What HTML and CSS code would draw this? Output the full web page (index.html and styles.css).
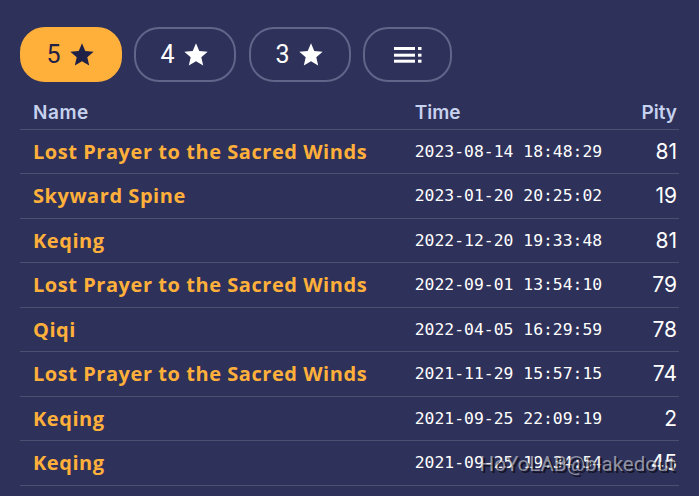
FILE: index.html
```html
<!DOCTYPE html>
<html>
<head>
<meta charset="utf-8">
<link rel="stylesheet" href="styles.css">
</head>
<body>
<div class="page">
  <div class="filters">
    <button class="chip chip-active">5 <svg class="star" viewBox="0 0 24 24"><path d="M12 17.27L18.18 21l-1.64-7.03L22 9.24l-7.19-.61L12 2 9.19 8.63 2 9.24l5.46 4.73L5.82 21z"/></svg></button>
    <button class="chip">4 <svg class="star" viewBox="0 0 24 24"><path d="M12 17.27L18.18 21l-1.64-7.03L22 9.24l-7.19-.61L12 2 9.19 8.63 2 9.24l5.46 4.73L5.82 21z"/></svg></button>
    <button class="chip chip-third">3 <svg class="star" viewBox="0 0 24 24"><path d="M12 17.27L18.18 21l-1.64-7.03L22 9.24l-7.19-.61L12 2 9.19 8.63 2 9.24l5.46 4.73L5.82 21z"/></svg></button>
    <button class="chip chip-icon"><svg class="menu" viewBox="0 0 28 16"><rect x="0" y="0" width="21" height="3"/><rect x="0" y="6.7" width="21" height="3"/><rect x="0" y="12.7" width="21" height="3"/><rect x="24" y="0" width="3.5" height="3"/><rect x="24" y="6.7" width="3.5" height="3"/><rect x="24" y="12.7" width="3.5" height="3"/></svg></button>
  </div>
  <table class="history">
    <thead>
      <tr><th class="c-name">Name</th><th class="c-time">Time</th><th class="c-pity">Pity</th></tr>
    </thead>
    <tbody>
      <tr><td class="c-name">Lost Prayer to the Sacred Winds</td><td class="c-time">2023-08-14 18:48:29</td><td class="c-pity">81</td></tr>
      <tr><td class="c-name">Skyward Spine</td><td class="c-time">2023-01-20 20:25:02</td><td class="c-pity">19</td></tr>
      <tr><td class="c-name">Keqing</td><td class="c-time">2022-12-20 19:33:48</td><td class="c-pity">81</td></tr>
      <tr><td class="c-name">Lost Prayer to the Sacred Winds</td><td class="c-time">2022-09-01 13:54:10</td><td class="c-pity">79</td></tr>
      <tr><td class="c-name">Qiqi</td><td class="c-time">2022-04-05 16:29:59</td><td class="c-pity">78</td></tr>
      <tr><td class="c-name">Lost Prayer to the Sacred Winds</td><td class="c-time">2021-11-29 15:57:15</td><td class="c-pity">74</td></tr>
      <tr><td class="c-name">Keqing</td><td class="c-time">2021-09-25 22:09:19</td><td class="c-pity">2</td></tr>
      <tr><td class="c-name">Keqing</td><td class="c-time">2021-09-25 19:34:54</td><td class="c-pity">45</td></tr>
    </tbody>
  </table>
</div>
<div class="watermark">HoYoLAB@blakedout</div>
</body>
</html>
```
FILE: styles.css
```css
html, body {
  margin: 0;
  padding: 0;
  background: #2e3159;
  height: 100%;
  overflow: hidden;
}
.page {
  padding: 27px 20px 0 20px;
}
.filters {
  display: flex;
  gap: 12px;
  margin-bottom: 13px;
}
.chip {
  height: 55px;
  width: 102px;
  border-radius: 25px;
  border: 2px solid #62658a;
  background: transparent;
  color: #ffffff;
  font-family: Roboto, "Liberation Sans", sans-serif;
  font-size: 25px;
  display: flex;
  align-items: center;
  justify-content: center;
  gap: 7px;
  padding: 0;
  box-sizing: border-box;
}
.chip-third {
  margin-left: 1px;
}
.chip-active {
  background: #ffb03b;
  border-color: #ffb03b;
  color: #1f2147;
}
.chip-icon {
  width: 89px;
}
.star {
  width: 28px;
  height: 28px;
  fill: currentColor;
}
.menu {
  width: 28px;
  height: 16px;
  fill: #ffffff;
}
.history {
  width: 659px;
  border-collapse: collapse;
}
.history th {
  font-family: Inter, "Noto Sans", sans-serif;
  font-weight: 600;
  font-size: 19px;
  color: #c7d2ee;
  text-align: left;
  height: 34px;
  padding: 6px 0 0 13px;
  box-sizing: border-box;
  vertical-align: top;
  border-bottom: 1px solid #4b5070;
}
.history td {
  height: 43.5px;
  padding: 0 0 0 13px;
  border-bottom: 1px solid #4b5070;
  vertical-align: middle;
}
.history th.c-pity, .history td.c-pity {
  text-align: right;
  padding-left: 0;
  padding-right: 2px;
}
.c-name {
  font-family: "Open Sans", "Noto Sans", sans-serif;
  font-weight: 700;
  font-size: 20px;
  letter-spacing: 0.55px;
  color: #ffb03b;
}
th.c-time, td.c-time {
  width: 223px;
}
td.c-time {
  font-family: "DejaVu Sans Mono", "Liberation Mono", monospace;
  font-size: 16.4px;
  color: #ffffff;
}
td.c-pity {
  font-family: Inter, "Noto Sans", sans-serif;
  font-size: 21px;
  color: #ffffff;
}
.watermark {
  position: absolute;
  right: 24px;
  top: 452px;
  font-family: Roboto, "Liberation Sans", sans-serif;
  font-size: 20.5px;
  color: rgba(215, 215, 220, 0.6);
  text-shadow: 2px 2px 0 rgba(10, 10, 20, 0.75);
}
```
